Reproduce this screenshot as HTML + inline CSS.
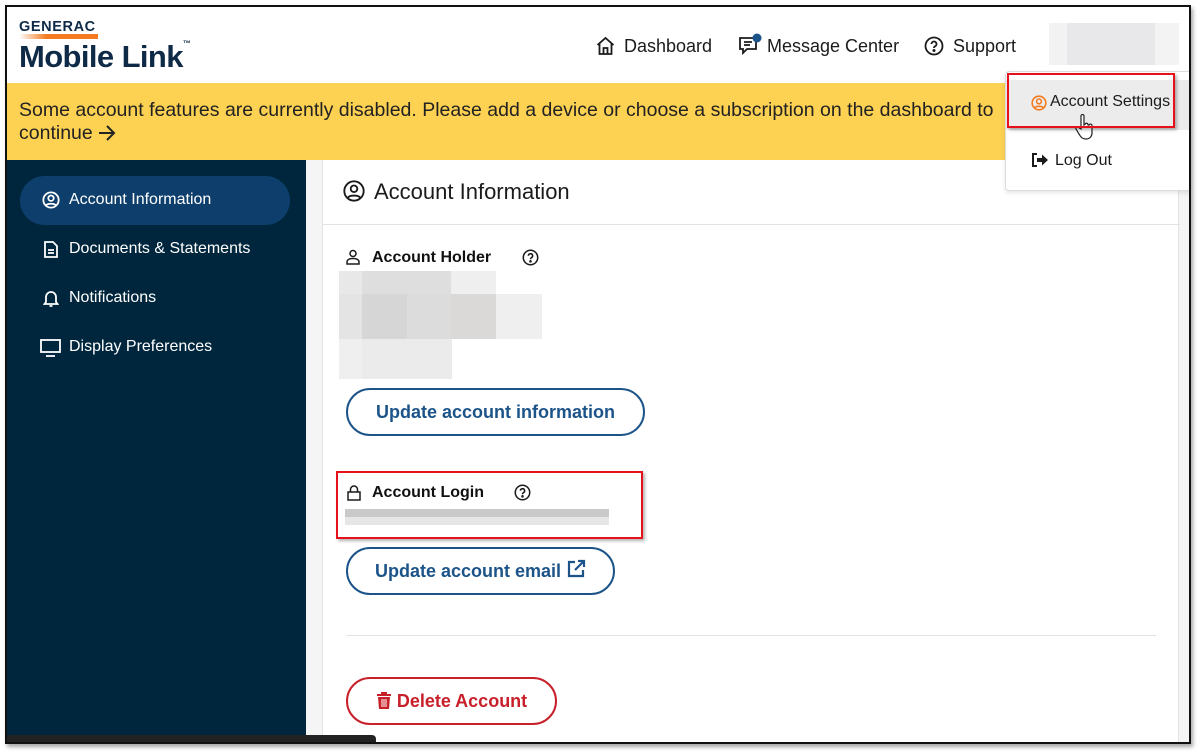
<!DOCTYPE html>
<html><head><meta charset="utf-8"><style>
*{box-sizing:border-box;margin:0;padding:0}
body{width:1199px;height:752px;background:#fff;font-family:"Liberation Sans",Arial,sans-serif;position:relative;overflow:hidden}
.frame{position:absolute;left:5px;top:5px;width:1186px;height:739px;border:2px solid #111;overflow:hidden;box-shadow:2px 3px 4px rgba(0,0,0,.35);background:#fff}
.abs{position:absolute}
.hdr{left:0;top:0;width:1184px;height:76px;background:#fff}
.banner{left:0;top:76px;width:1184px;height:77px;background:#fdd152;font-size:19.5px;color:#222;padding:16px 12px 0;line-height:23px;white-space:nowrap}
.side{left:0;top:153px;width:299px;height:590px;background:#00263d}
.main{left:299px;top:153px;width:885px;height:590px;background:#f5f5f5}
.card{left:315px;top:153px;width:857px;height:590px;background:#fff;border:1px solid #e2e2e2;border-top:none}
.nav{color:#fff;font-size:16px;position:absolute;left:62px}
.btn{position:absolute;border:2px solid #1c5489;border-radius:24px;color:#1c5489;font-weight:bold;font-size:18px;text-align:center}
.lbl{position:absolute;font-weight:bold;font-size:16px;color:#111}
.nt{position:absolute;font-size:18px;color:#1b1b1b;top:29px}
</style></head><body>
<div class="frame">
<div class="abs hdr">
  <div class="abs" style="left:12px;top:12px;font-weight:bold;font-size:14.5px;color:#0e2a47;letter-spacing:0.6px">GENERAC</div>
  <div class="abs" style="left:12px;top:27px;width:79px;height:5px;background:linear-gradient(90deg,#fff0 0,#f47b20 35%,#f47b20)"></div>
  <div class="abs" style="left:12px;top:32px;font-weight:bold;font-size:31px;color:#0e2a47;letter-spacing:-0.6px">Mobile Link<span style="font-size:8px;vertical-align:top">™</span></div>
  <svg class="abs" style="left:588px;top:29px" width="21" height="20" viewBox="0 0 20 20" fill="none" stroke="#1b1b1b" stroke-width="1.8"><path d="M2 9L10 2l8 7M4 7.5V18h12V7.5M8 18v-6h4v6"/></svg>
  <div class="nt" style="left:617px">Dashboard</div>
  <svg class="abs" style="left:731px;top:26px" width="26" height="24" viewBox="0 0 26 24" fill="none" stroke="#1b1b1b" stroke-width="1.8"><path d="M2 5h16v11H9l-4 4v-4H2z M6 9h8 M6 12h6"/><circle cx="19" cy="5" r="4.5" fill="#1c5489" stroke="none"/></svg>
  <div class="nt" style="left:760px">Message Center</div>
  <svg class="abs" style="left:917px;top:29px" width="20" height="20" viewBox="0 0 20 20" fill="none" stroke="#1b1b1b" stroke-width="1.8"><circle cx="10" cy="10" r="8.5"/><path d="M7.5 8a2.5 2.5 0 1 1 3.5 2.3c-.8.4-1 .9-1 1.7"/><circle cx="10" cy="14.5" r=".6" fill="#1b1b1b"/></svg>
  <div class="nt" style="left:946px">Support</div>
  <div class="abs" style="left:1042px;top:16px;width:130px;height:42px;background:linear-gradient(90deg,#f2f2f3 0 18px,#e8e8ea 18px 106px,#f3f3f4 106px)"></div>
</div>
<div class="abs banner">Some account features are currently disabled. Please add a device or choose a subscription on the dashboard to<br>continue <svg width="18" height="16" viewBox="0 0 18 16" fill="none" stroke="#222" stroke-width="2" style="vertical-align:-2px"><path d="M1 8h15M9 1l7 7-7 7"/></svg></div>
<div class="abs side">
  <div class="abs" style="left:13px;top:16px;width:270px;height:49px;border-radius:25px;background:#0e3f6c"></div>
  <svg class="abs" style="left:35px;top:31px" width="18" height="18" viewBox="0 0 20 20" fill="none" stroke="#fff" stroke-width="2"><circle cx="10" cy="10" r="8.5"/><circle cx="10" cy="8" r="3"/><path d="M4.5 16c1.5-2.5 9.5-2.5 11 0"/></svg>
  <div class="nav" style="top:31px">Account Information</div>
  <svg class="abs" style="left:37px;top:81px" width="14" height="17" viewBox="0 0 14 17" fill="none" stroke="#fff" stroke-width="1.8"><path d="M1 1h8l4 4v11H1z M4 9h6 M4 12h6"/></svg>
  <div class="nav" style="top:80px">Documents &amp; Statements</div>
  <svg class="abs" style="left:36px;top:130px" width="16" height="17" viewBox="0 0 16 17" fill="none" stroke="#fff" stroke-width="1.8"><path d="M3 12V7a5 5 0 0 1 10 0v5l1.5 2h-13z M6.5 16h3"/></svg>
  <div class="nav" style="top:129px">Notifications</div>
  <svg class="abs" style="left:33px;top:179px" width="21" height="18" viewBox="0 0 21 18" fill="none" stroke="#fff" stroke-width="1.8"><rect x="1" y="1" width="19" height="12"/><path d="M6 17h9"/></svg>
  <div class="nav" style="top:178px">Display Preferences</div>
</div>
<div class="abs main"></div>
<div class="abs card">
  <svg class="abs" style="left:20px;top:20px" width="22" height="22" viewBox="0 0 20 20" fill="none" stroke="#1b1b1b" stroke-width="1.7"><circle cx="10" cy="10" r="8.8"/><circle cx="10" cy="8" r="3"/><path d="M4.5 16c1.5-2.5 9.5-2.5 11 0"/></svg>
  <div class="abs" style="left:51px;top:19px;font-size:22px;color:#1b1b1b">Account Information</div>
  <div class="abs" style="left:0;top:64px;width:857px;height:1px;background:#e2e2e2"></div>
  <svg class="abs" style="left:23px;top:89px" width="14" height="16" viewBox="0 0 14 16" fill="none" stroke="#1b1b1b" stroke-width="1.5"><circle cx="7" cy="4.5" r="3"/><path d="M1 15v-2c0-2 2-3.5 6-3.5s6 1.5 6 3.5v2z"/></svg>
  <div class="lbl" style="left:49px;top:89px">Account Holder</div>
  <svg class="abs" style="left:199px;top:89px" width="17" height="17" viewBox="0 0 20 20" fill="none" stroke="#1b1b1b" stroke-width="1.8"><circle cx="10" cy="10" r="8.5"/><path d="M7.5 8a2.5 2.5 0 1 1 3.5 2.3c-.8.4-1 .9-1 1.7"/><circle cx="10" cy="14.5" r=".6" fill="#1b1b1b"/></svg>
  <div class="abs" style="left:16px;top:111px;width:157px;height:23px;background:linear-gradient(90deg,#e8e8e8 0 23px,#dedede 23px 112px,#efefef 112px)"></div>
  <div class="abs" style="left:16px;top:134px;width:203px;height:45px;background:linear-gradient(90deg,#e4e4e4 0 23px,#d6d6d6 23px 68px,#dcdcdc 68px 112px,#dad9d8 112px 157px,#efefef 157px)"></div>
  <div class="abs" style="left:16px;top:179px;width:113px;height:40px;background:linear-gradient(90deg,#efefef 0 23px,#ebebeb 23px)"></div>
  <div class="btn" style="left:23px;top:228px;width:299px;height:48px;line-height:44px">Update account information</div>
  <div class="abs" style="left:13px;top:311px;width:307px;height:68px;border:2px solid #e8101a;box-shadow:2px 2px 3px rgba(0,0,0,.3)"></div>
  <svg class="abs" style="left:24px;top:325px" width="14" height="16" viewBox="0 0 14 16" fill="none" stroke="#1b1b1b" stroke-width="1.5"><rect x="1" y="7" width="12" height="8"/><path d="M3.5 7V4.5a3.5 3.5 0 0 1 7 0V7"/></svg>
  <div class="lbl" style="left:49px;top:324px">Account Login</div>
  <svg class="abs" style="left:191px;top:324px" width="17" height="17" viewBox="0 0 20 20" fill="none" stroke="#1b1b1b" stroke-width="1.8"><circle cx="10" cy="10" r="8.5"/><path d="M7.5 8a2.5 2.5 0 1 1 3.5 2.3c-.8.4-1 .9-1 1.7"/><circle cx="10" cy="14.5" r=".6" fill="#1b1b1b"/></svg>
  <div class="abs" style="left:22px;top:349px;width:264px;height:8px;background:#c9c9c9"></div>
  <div class="abs" style="left:22px;top:357px;width:264px;height:8px;background:#e6e6e6"></div>
  <div class="btn" style="left:23px;top:387px;width:269px;height:48px;line-height:44px">Update account email <svg width="20" height="20" viewBox="0 0 20 20" fill="none" stroke="#1c5489" stroke-width="2.2" style="vertical-align:-2px"><path d="M9 3H3v14h14v-6 M12 2h6v6 M18 2l-9 9"/></svg></div>
  <div class="abs" style="left:23px;top:475px;width:810px;height:1px;background:#e2e2e2"></div>
  <div class="btn" style="left:23px;top:517px;width:211px;height:48px;line-height:44px;border-color:#c8202a;color:#c8202a"><svg width="16" height="18" viewBox="0 0 16 18" style="vertical-align:-2px"><path d="M5 1h6v2h4v2H1V3h4z" fill="#c8202a"/><path d="M2 6h12l-1 12H3z" fill="#c8202a"/><path d="M6 8v8M8 8v8M10 8v8" stroke="#fff" stroke-width="1"/></svg> Delete Account</div>
</div>
<div class="abs" style="left:998px;top:64px;width:190px;height:120px;background:#fff;border:1px solid #ddd;border-radius:4px;box-shadow:0 2px 4px rgba(0,0,0,.1)">
  <div class="abs" style="left:0;top:8px;width:190px;height:50px;background:#ececec"></div>
  <svg class="abs" style="left:25px;top:23px" width="16" height="16" viewBox="0 0 20 20" fill="none" stroke="#f47b20" stroke-width="2"><circle cx="10" cy="10" r="8.5"/><circle cx="10" cy="8" r="3"/><path d="M4.5 16c1.5-2.5 9.5-2.5 11 0"/></svg>
  <div class="abs" style="left:44px;top:21px;font-size:16px;color:#1b1b1b">Account Settings</div>
  <svg class="abs" style="left:69px;top:42px" width="20" height="26" viewBox="0 0 20 26" fill="#fff" stroke="#222" stroke-width="1.2"><path d="M6 2a1.5 1.5 0 0 1 3 0v9l1-.5a1.5 1.5 0 0 1 3 .5l1 .2a1.5 1.5 0 0 1 3 1V19c0 3-2 6-6 6s-5-2-7-5l-3-5a1.5 1.5 0 0 1 2.5-1.5L6 15z"/></svg>
  <svg class="abs" style="left:26px;top:81px" width="17" height="14" viewBox="0 0 17 14"><path d="M5 1H1v12h4" fill="none" stroke="#1b1b1b" stroke-width="2"/><path d="M5 5h5V1.5L16 7l-6 5.5V9H5z" fill="#1b1b1b"/></svg>
  <div class="abs" style="left:49px;top:80px;font-size:16px;color:#1b1b1b">Log Out</div>
</div>
<div class="abs" style="left:1000px;top:66px;width:168px;height:55px;border:2px solid #e8101a;box-shadow:2px 2px 3px rgba(0,0,0,.3)"></div>
<div class="abs" style="left:0;top:728px;width:369px;height:10px;background:#222;border-radius:0 4px 0 0"></div>
</div>
</body></html>
